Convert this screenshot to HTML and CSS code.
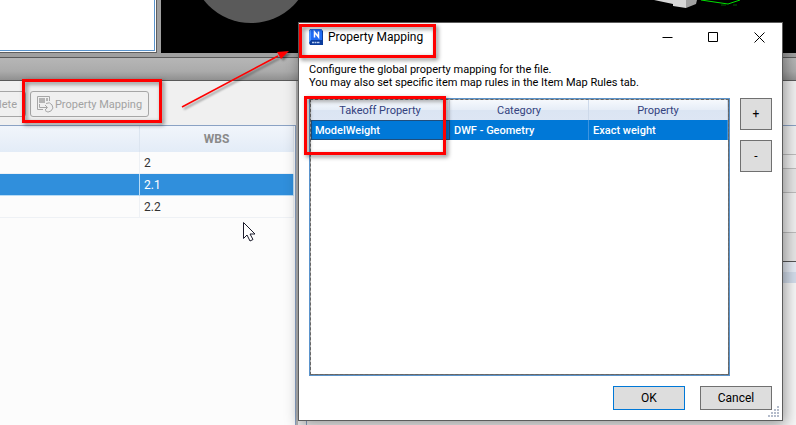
FILE: index.html
```html
<!DOCTYPE html>
<html lang="en">
<head>
  <meta charset="UTF-8" />
  <meta name="viewport" content="width=device-width, initial-scale=1.0" />
  <title>Property Mapping</title>
  <link rel="stylesheet" href="styles.css">
</head>
<body>

  <div class="top">
    <div class="tree"></div>
    <div class="scene">
      <svg width="635" height="53" viewBox="0 0 635 53">
        <circle cx="90" cy="-37" r="60" fill="#5a5a5a" />
        <polygon points="493,0 512,4 512,6 525,8 525,0" fill="#d6d6d6" />
        <polygon points="525,0 536,0 535,4 525,8" fill="#a0a0a0" />
        <path d="M540 0 L567 4 L579 0" fill="none" stroke="#00e000" />
        <path d="M560 5h5M572 5h4" stroke="#006000" />
      </svg>
    </div>
  </div>

  <div class="splitter"></div>

  <main class="workspace">
    <section class="takeoff">
      <div class="toolbar">
        <button type="button" class="tool delete" disabled>Delete</button>
        <div class="marked">
          <button type="button" class="tool" disabled>
            <svg width="17" height="17" viewBox="0 0 17 17" fill="none" stroke="#a6a6a6">
              <path d="M12.500 5V.5H.5v13H6" />
              <path d="M2 2h6v5H2zM9 2h2v3H9z" fill="#b4b4b4" stroke="none" />
              <path d="M2.500 8v3.500H10M8 9l2.500 2.500L8 14" />
              <path d="M9 7.500a4.500 4.500 0 1 1-1 7" />
            </svg>
            Property Mapping
          </button>
          <span class="mark mark-tool"></span>
        </div>
      </div>
      <div class="items">
        <table class="wbs">
          <thead>
            <tr><th></th><th>WBS</th></tr>
          </thead>
          <tbody>
            <tr><td></td><td>2</td></tr>
            <tr class="selected"><td></td><td>2.1</td></tr>
            <tr><td></td><td>2.2</td></tr>
          </tbody>
        </table>
      </div>
    </section>
    <section class="details">
      <div class="line l1"></div>
      <div class="line l2"></div>
      <div class="line l3"></div>
      <div class="line l4"></div>
      <div class="line l5"></div>
      <div class="line l6"></div>
      <div class="rest"></div>
    </section>
  </main>

  <div class="dialog" role="dialog" aria-labelledby="dialog-title">
    <header class="titlebar">
      <svg class="logo" width="14" height="17" viewBox="0 0 14 17">
        <path d="M1 0h11l2 2v14H1l-1-2V2z" fill="#0b3c9c" />
        <path d="M2 0h10l1 1v10H2z" fill="#1f6cf5" />
        <path d="M0 2l2-2v11l-2 3z" fill="#4a95ff" />
        <path d="M5.500 8.500V3l4 5V2.500" fill="none" stroke="#fff" stroke-width="1.500" />
        <path d="M3 13.500h8" stroke="#b9cdf2" stroke-width="1.500" stroke-dasharray="2 .5" />
      </svg>
      <h1 id="dialog-title">Property Mapping</h1>
      <div class="window-buttons">
        <button type="button" aria-label="Minimize">
          <svg width="11" height="11" viewBox="0 0 11 11"><path d="M.5 5.500h10" /></svg>
        </button>
        <button type="button" aria-label="Maximize">
          <svg width="11" height="11" viewBox="0 0 11 11"><path d="M.5.5h9v9h-9z" /></svg>
        </button>
        <button type="button" aria-label="Close">
          <svg width="11" height="11" viewBox="0 0 11 11"><path d="M.5.5l10 10M10.500.5l-10 10" /></svg>
        </button>
      </div>
      <span class="mark mark-title"></span>
    </header>

    <p class="message">Configure the global property mapping for the file.<br>You may also set specific item map rules in the Item Map Rules tab.</p>

    <div class="mapping">
      <div class="grid">
        <table>
          <thead>
            <tr><th>Takeoff Property</th><th>Category</th><th>Property</th></tr>
          </thead>
          <tbody>
            <tr><td class="current">ModelWeight</td><td>DWF - Geometry</td><td>Exact weight</td></tr>
          </tbody>
        </table>
        <span class="mark mark-column"></span>
      </div>
      <div class="row-buttons">
        <button type="button" class="btn">+</button>
        <button type="button" class="btn">-</button>
      </div>
    </div>

    <footer class="actions">
      <button type="button" class="btn default">OK</button>
      <button type="button" class="btn">Cancel</button>
    </footer>
    <svg class="grip" width="12" height="12" viewBox="0 0 12 12">
      <path d="M9 1h2M6 4h2M9 4h2M3 7h2M6 7h2M9 7h2M0 10h2M3 10h2M6 10h2M9 10h2" stroke="#b4bccb" stroke-width="2" />
    </svg>
  </div>

  <svg class="arrow" width="120" height="64" viewBox="0 0 120 64">
    <path d="M2 59L98 8" stroke="#f00" stroke-width="1.500" />
    <path d="M109 3L97 4L101 11z" fill="#f00" />
  </svg>

  <svg class="cursor" width="13" height="20" viewBox="0 0 13 20">
    <path d="M.5.5v16l3.500-3.500 3 6 3-1.500-3-5.500h5z" fill="#fff" stroke="#1a1a2a" />
  </svg>

</body>
</html>
```

FILE: styles.css
```css
* {
  box-sizing: border-box;
}

body {
  position: relative;
  display: flex;
  flex-direction: column;
  min-height: 100vh;
  margin: 0;
  overflow: hidden;
  background-color: #f0f0f0;
  font-family: Roboto, "Open Sans", sans-serif;
  font-size: 12px;
}

button {
  padding: 0;
  font: inherit;
}

table {
  width: 100%;
  border-collapse: separate;
  border-spacing: 0;
  table-layout: fixed;
}

/* viewer behind the dialog */
.top {
  display: flex;
  gap: 4px;
  height: 57px;
  padding-bottom: 4px;
  background-color: #a0a0a0;
}

.tree {
  flex: 0 0 157px;
  height: 53px;
  background-color: #fff;
  border: solid #5e5e5e;
  border-width: 0 1px 1px 0;
  box-shadow: inset -1px -1px #fff, inset -2px -2px #5b94cc;
}

.scene {
  flex: 1;
  overflow: hidden;
  background-color: #000;
}

.scene svg {
  display: block;
}

.splitter {
  height: 24px;
  border: solid #5a5a5a;
  border-width: 1px 0;
  background: linear-gradient(#b6b6b6, #ababab 60%, #909090);
}

.workspace {
  flex: 1;
  display: flex;
}

.takeoff {
  flex: 0 0 296px;
  display: flex;
  flex-direction: column;
}

.toolbar {
  display: flex;
  gap: 4px;
  height: 44px;
  padding-top: 10px;
}

.tool {
  display: flex;
  align-items: center;
  justify-content: center;
  gap: 1px;
  width: 119px;
  height: 26px;
  border: 1px solid #a6a6a6;
  border-radius: 3px;
  background-color: #f0f0f0;
  color: #a2a2a2;
  font-size: 11px;
  white-space: nowrap;
}

.tool svg {
  flex: none;
}

.delete {
  width: 60px;
  margin-left: -34px;
  padding-right: 8px;
  justify-content: flex-end;
}

.marked {
  position: relative;
}

.items {
  flex: 1;
  border: solid #8aa2c4;
  border-width: 1px 1px 0 0;
  padding-right: 1px;
  background-color: #fcfcfc;
}

.wbs th {
  height: 26px;
  padding: 0;
  border-right: 1px solid #dce5f0;
  background: linear-gradient(#f1f5fb, #e3ecf7);
  color: #8a8a8a;
}

.wbs th:first-child {
  width: 140px;
}

.wbs td {
  height: 22px;
  padding: 0 4px;
  border: solid #eef1f5;
  border-width: 0 1px 1px 0;
  color: #333;
}

.wbs .selected td {
  background-color: #308fdc;
  border-color: #b8dcf6;
  color: #fff;
}

.details {
  flex: 1;
  display: flex;
  flex-direction: column;
  padding-top: 44px;
  border-left: 2px solid #b5b5b5;
}

.line {
  border-top: 1px solid #bcbcbc;
}

.l1 {
  height: 29px;
  border-color: #8aa2c4;
}

.l2 {
  height: 14px;
}

.l3 {
  height: 24px;
  background-color: #e6e6e6;
}

.l4 {
  height: 40px;
}

.l5 {
  height: 29px;
  background-color: #e6e6e6;
}

.l6 {
  height: 22px;
  border-color: #555;
  background: linear-gradient(#e6ecf5 50%, #d2dcea 50%);
}

.rest {
  flex: 1;
  margin-left: 8px;
  border-left: 1px solid #8aa2c4;
  background-color: #f7f7f7;
}

/* dialog */
.dialog {
  position: absolute;
  top: 22px;
  left: 298px;
  right: 13px;
  padding: 0 10px 10px;
  border: 1px solid #5c5c5c;
  background-color: #fff;
  box-shadow: 2px 4px 14px rgba(0, 0, 0, 0.4);
}

.titlebar {
  position: relative;
  display: flex;
  align-items: center;
  gap: 5px;
  height: 28px;
}

.titlebar h1 {
  flex: 1;
  margin: 0;
  font-size: 12px;
  font-weight: normal;
}

.window-buttons {
  display: flex;
  gap: 1px;
}

.window-buttons button {
  display: flex;
  align-items: center;
  justify-content: center;
  width: 45px;
  height: 28px;
  border: 0;
  background: none;
}

.window-buttons button:last-child {
  margin-right: -10px;
}

.window-buttons path {
  fill: none;
  stroke: #000;
}

.message {
  margin: 12px 0 9px;
  font-size: 11px;
  line-height: 13px;
}

.mapping {
  display: flex;
  gap: 10px;
}

.grid {
  position: relative;
  flex: 1;
  min-height: 278px;
  border: 1px solid #5b94cc;
  outline: 1px dashed #666;
  outline-offset: -2px;
  padding: 1px;
  box-shadow: inset -1px -1px #707070, inset 1px 1px #b0b0b0;
}

.grid th {
  height: 20px;
  padding: 0;
  border-right: 1px solid #cdd9ea;
  background: linear-gradient(#f6f9fd, #e6edf7 50%, #dbe5f3 50%, #dde6f4);
  color: #33427e;
  font-size: 11px;
  font-weight: normal;
}

.grid td {
  height: 20px;
  padding: 0 4px;
  border-right: 1px solid #3d94e0;
  background-color: #0078d7;
  color: #fff;
  font-size: 11px;
  font-weight: 500;
}

.grid .current {
  outline: 1px solid #1f4e7d;
  outline-offset: -1px;
}

.row-buttons {
  display: flex;
  flex-direction: column;
  gap: 10px;
}

.btn {
  width: 72px;
  height: 24px;
  border: 1px solid #707070;
  background-color: #ddd;
  color: #000;
}

.row-buttons .btn {
  width: 32px;
  height: 32px;
}

.btn.default {
  border-color: #0078d7;
}

.actions {
  display: flex;
  justify-content: flex-end;
  gap: 15px;
  margin-top: 10px;
}

.grip {
  position: absolute;
  right: 2px;
  bottom: 2px;
}

/* callouts */
.mark {
  position: absolute;
  border: 3px solid #f00;
  filter: drop-shadow(2px 2px 2px rgba(0, 0, 0, 0.5));
  pointer-events: none;
}

.mark-tool {
  top: -12px;
  left: -8px;
  width: 140px;
  height: 44px;
}

.mark-title {
  top: 1px;
  left: -10px;
  width: 137px;
  height: 34px;
}

.mark-column {
  top: -3px;
  left: -6px;
  width: 142px;
  height: 59px;
}

.arrow {
  position: absolute;
  top: 48px;
  left: 180px;
  filter: drop-shadow(2px 2px 1px rgba(0, 0, 0, 0.4));
}

.cursor {
  position: absolute;
  top: 222px;
  left: 243px;
}
```
